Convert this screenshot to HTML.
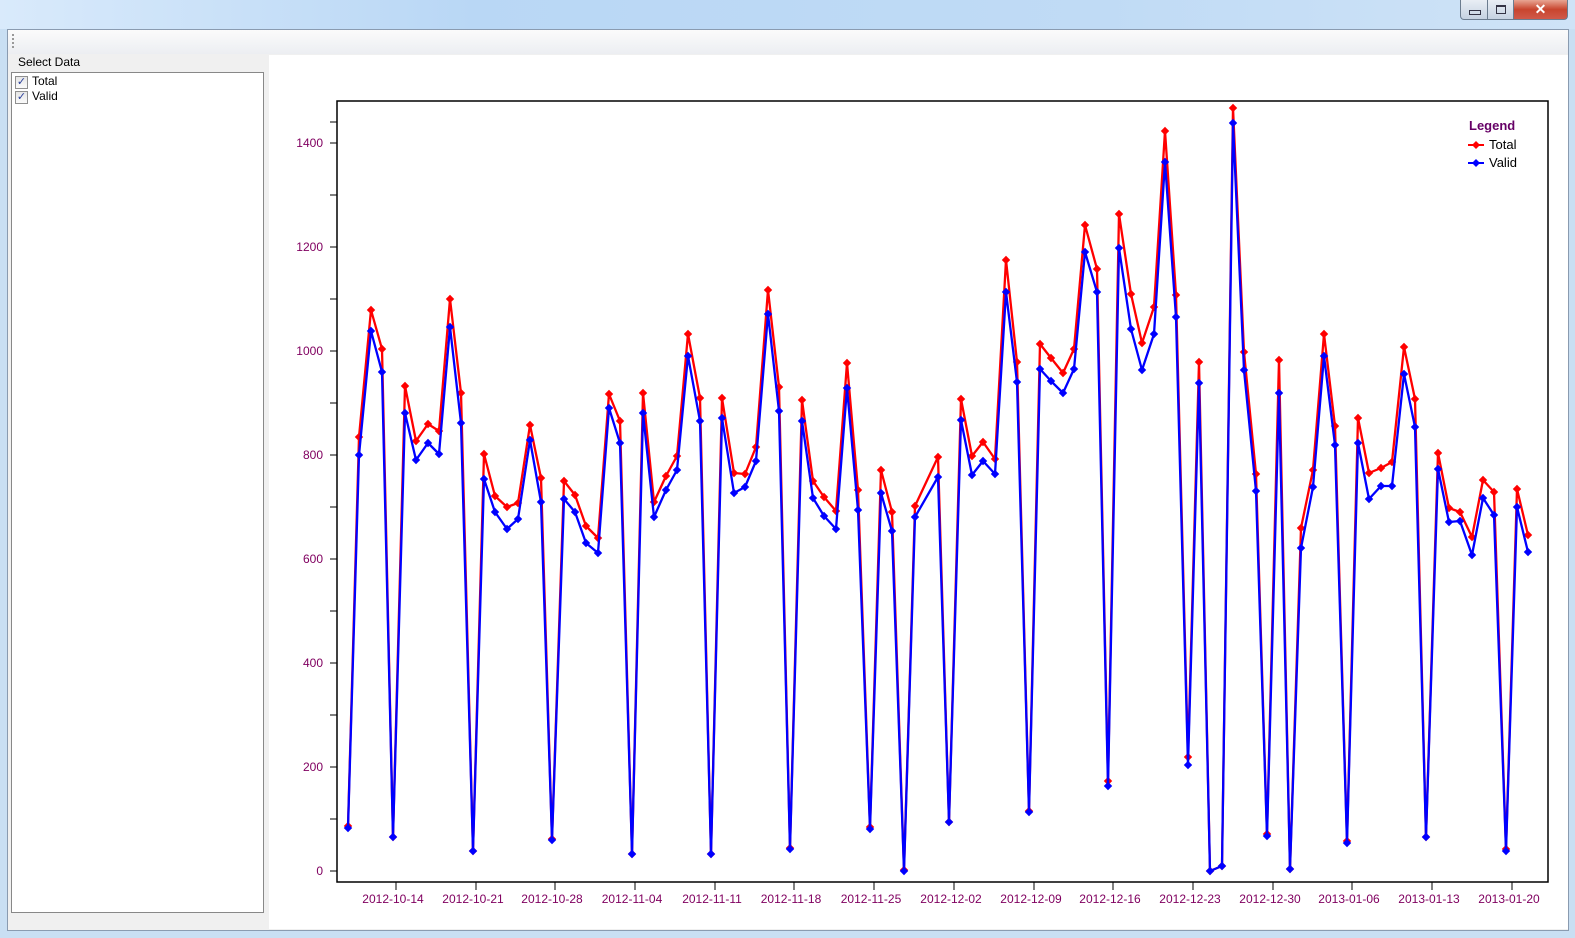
<!DOCTYPE html>
<html><head><meta charset="utf-8"><style>
body{margin:0;width:1575px;height:938px;overflow:hidden;background:#c9dff3;font-family:"Liberation Sans",sans-serif;position:relative}
.title{position:absolute;left:0;top:0;width:1575px;height:29px;background:linear-gradient(90deg,#d9eafb,#b9d7f5 30%,#c0dbf5 70%,#cfe3f7)}
.btn{position:absolute;top:0;height:19px;border:1px solid #6b7c8f;border-top:none}
.client{position:absolute;left:7px;top:29px;width:1560px;height:900px;background:#f0f0f0;border:1px solid #8a9bb0}
.tool{position:absolute;left:0;top:0;width:1560px;height:24px;background:linear-gradient(#fbfbfb,#eceef2)}
.grip{position:absolute;left:4px;top:4px;width:2px;height:14px;background:repeating-linear-gradient(#999 0 2px,transparent 2px 4px)}
.white{position:absolute;left:261px;top:25px;width:1299px;height:874px;background:#fff}
.gb{position:absolute;left:3px;top:42px;width:251px;height:839px;background:#fff;border:1px solid #888}
.gbl{position:absolute;left:9px;top:25px;font-size:12px;color:#000;background:#f0f0f0;padding:0 1px}
.cb{position:absolute;left:3px;width:11px;height:11px;border:1px solid #8f8f8f;background:linear-gradient(#e6e6e6,#fafafa);font-size:11px;color:#2a3f9a;line-height:11px;text-align:center}
.cbl{position:absolute;left:20px;font-size:12px}
</style></head><body>
<div class="title"></div>
<div class="btn" style="left:1460px;width:26px;background:linear-gradient(#e9eef5,#c5d2e2);border-radius:0 0 0 4px"><div style="position:absolute;left:8px;top:10px;width:10px;height:3px;border:1px solid #334"></div></div>
<div class="btn" style="left:1487px;width:25px;background:linear-gradient(#e9eef5,#c5d2e2)"><div style="position:absolute;left:8px;top:5px;width:8px;height:6px;border:1px solid #334;border-top-width:2px"></div></div>
<div class="btn" style="left:1513px;width:53px;background:linear-gradient(#e8a593,#c8452e 50%,#d0594a);border-radius:0 0 4px 0;color:#fff;font-size:14px;font-weight:bold;text-align:center;line-height:19px">✕</div>
<div class="client">
 <div class="tool"><div class="grip"></div></div>
 <div class="white"></div>
 <div class="gb">
  <div class="cb" style="top:3px">✓</div><div class="cbl" style="top:1px">Total</div>
  <div class="cb" style="top:18px">✓</div><div class="cbl" style="top:16px">Valid</div>
 </div>
 <div class="gbl">Select Data</div>
</div>
<svg style="position:absolute;left:0;top:0" width="1575" height="938" font-family="Liberation Sans, sans-serif">
<defs>
<marker id="mr" markerWidth="10" markerHeight="10" refX="5" refY="5" markerUnits="userSpaceOnUse"><path d="M5 0.8L9.2 5L5 9.2L0.8 5Z" fill="#f00"/></marker>
<marker id="mb" markerWidth="10" markerHeight="10" refX="5" refY="5" markerUnits="userSpaceOnUse"><path d="M5 0.8L9.2 5L5 9.2L0.8 5Z" fill="#00f"/></marker>
</defs>
<rect x="337" y="101" width="1211" height="781" fill="none" stroke="#000" stroke-width="1.5"/>
<g stroke="#000" stroke-width="1">
<line x1="330" y1="871" x2="337" y2="871"/><line x1="330" y1="819" x2="337" y2="819"/><line x1="330" y1="767" x2="337" y2="767"/><line x1="330" y1="715" x2="337" y2="715"/><line x1="330" y1="663" x2="337" y2="663"/><line x1="330" y1="611" x2="337" y2="611"/><line x1="330" y1="559" x2="337" y2="559"/><line x1="330" y1="507" x2="337" y2="507"/><line x1="330" y1="455" x2="337" y2="455"/><line x1="330" y1="403" x2="337" y2="403"/><line x1="330" y1="351" x2="337" y2="351"/><line x1="330" y1="299" x2="337" y2="299"/><line x1="330" y1="247" x2="337" y2="247"/><line x1="330" y1="195" x2="337" y2="195"/><line x1="330" y1="143" x2="337" y2="143"/><line x1="330" y1="122" x2="337" y2="122"/>
</g>
<g stroke="#000" stroke-width="1">
<line x1="396" y1="882" x2="396" y2="890"/><line x1="476" y1="882" x2="476" y2="890"/><line x1="555" y1="882" x2="555" y2="890"/><line x1="635" y1="882" x2="635" y2="890"/><line x1="715" y1="882" x2="715" y2="890"/><line x1="794" y1="882" x2="794" y2="890"/><line x1="874" y1="882" x2="874" y2="890"/><line x1="954" y1="882" x2="954" y2="890"/><line x1="1034" y1="882" x2="1034" y2="890"/><line x1="1113" y1="882" x2="1113" y2="890"/><line x1="1193" y1="882" x2="1193" y2="890"/><line x1="1273" y1="882" x2="1273" y2="890"/><line x1="1352" y1="882" x2="1352" y2="890"/><line x1="1432" y1="882" x2="1432" y2="890"/><line x1="1512" y1="882" x2="1512" y2="890"/>
</g>
<g fill="#800060" font-size="12" text-anchor="end">
<text x="323" y="875">0</text><text x="323" y="771">200</text><text x="323" y="667">400</text><text x="323" y="563">600</text><text x="323" y="459">800</text><text x="323" y="355">1000</text><text x="323" y="251">1200</text><text x="323" y="147">1400</text>
</g>
<g fill="#800060" font-size="12" text-anchor="middle">
<text x="393" y="903">2012-10-14</text><text x="473" y="903">2012-10-21</text><text x="552" y="903">2012-10-28</text><text x="632" y="903">2012-11-04</text><text x="712" y="903">2012-11-11</text><text x="791" y="903">2012-11-18</text><text x="871" y="903">2012-11-25</text><text x="951" y="903">2012-12-02</text><text x="1031" y="903">2012-12-09</text><text x="1110" y="903">2012-12-16</text><text x="1190" y="903">2012-12-23</text><text x="1270" y="903">2012-12-30</text><text x="1349" y="903">2013-01-06</text><text x="1429" y="903">2013-01-13</text><text x="1509" y="903">2013-01-20</text>
</g>
<polyline fill="none" stroke="#f00" stroke-width="2.3" stroke-linejoin="round" marker-start="url(#mr)" marker-mid="url(#mr)" marker-end="url(#mr)" points="348,826 359,437 371,310 382,349 393,837 405,386 416,441 428,424 439,431 450,299 461,393 473,851 484,454 495,496 507,507 518,503 530,425 541,478 552,839 564,481 575,495 586,526 598,538 609,394 620,421 632,854 643,393 654,502 666,476 677,456 688,334 700,398 711,854 722,398 734,473 745,474 756,447 768,290 779,387 790,848 802,400 813,481 824,497 836,511 847,363 858,490 870,827 881,470 892,512 904,870 915,506 938,457 949,822 961,399 972,456 983,442 995,459 1006,260 1017,362 1029,811 1040,344 1051,358 1063,373 1074,349 1085,225 1097,269 1108,781 1119,214 1131,294 1142,343 1154,307 1165,131 1176,295 1188,757 1199,362 1210,871 1222,866 1233,108 1244,352 1256,474 1267,834 1279,360 1290,869 1301,528 1313,470 1324,334 1335,426 1347,841 1358,418 1369,473 1381,468 1392,462 1404,347 1415,399 1426,837 1438,453 1449,508 1460,512 1472,537 1483,480 1494,492 1506,849 1517,489 1528,535"/>
<polyline fill="none" stroke="#00f" stroke-width="2.3" stroke-linejoin="round" marker-start="url(#mb)" marker-mid="url(#mb)" marker-end="url(#mb)" points="348,828 359,455 371,331 382,372 393,837 405,413 416,460 428,443 439,454 450,327 461,423 473,851 484,479 495,512 507,529 518,519 530,440 541,502 552,840 564,499 575,512 586,543 598,553 609,408 620,443 632,854 643,413 654,517 666,490 677,470 688,356 700,421 711,854 722,418 734,493 745,487 756,461 768,314 779,411 790,849 802,421 813,498 824,516 836,529 847,388 858,510 870,829 881,493 892,531 904,871 915,517 938,477 949,822 961,420 972,475 983,461 995,474 1006,292 1017,382 1029,812 1040,369 1051,381 1063,393 1074,369 1085,252 1097,292 1108,786 1119,248 1131,329 1142,370 1154,334 1165,162 1176,317 1188,765 1199,383 1210,871 1222,866 1233,123 1244,370 1256,491 1267,836 1279,393 1290,869 1301,548 1313,487 1324,356 1335,445 1347,843 1358,443 1369,499 1381,486 1392,486 1404,374 1415,427 1426,837 1438,469 1449,522 1460,521 1472,555 1483,498 1494,515 1506,851 1517,507 1528,552"/>
<text x="1469" y="130" font-size="13" font-weight="bold" fill="#660066">Legend</text>
<line x1="1468" y1="145" x2="1484" y2="145" stroke="#f00" stroke-width="2"/><path d="M1476 141L1480 145L1476 149L1472 145Z" fill="#f00"/>
<text x="1489" y="149" font-size="13" fill="#000">Total</text>
<line x1="1468" y1="163" x2="1484" y2="163" stroke="#00f" stroke-width="2"/><path d="M1476 159L1480 163L1476 167L1472 163Z" fill="#00f"/>
<text x="1489" y="167" font-size="13" fill="#000">Valid</text>
</svg>
</body></html>
